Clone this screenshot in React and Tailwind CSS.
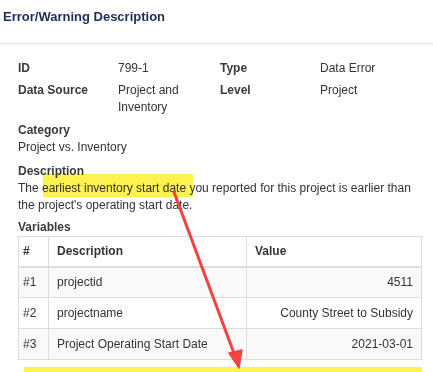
import React from 'react';

const rows = [
  { n: '#1', desc: 'projectid', value: '4511' },
  { n: '#2', desc: 'projectname', value: 'County Street to Subsidy' },
  { n: '#3', desc: 'Project Operating Start Date', value: '2021-03-01' },
];

function Field({ label, children }) {
  return (
    <>
      <div className="font-bold text-[#3a3a3a]">{label}</div>
      <div>{children}</div>
    </>
  );
}

export default function App() {
  return (
    <div className="relative w-[433px] h-[372px] overflow-hidden bg-white text-[12px] leading-[17px] text-[#333] font-['Liberation_Sans',Arial,sans-serif]">
      {/* header */}
      <div className="h-[44px] border-b border-[#e5e5e5] pl-[3px] pt-[8px]">
        <h1 className="text-[13px] font-bold text-[#1f2c5c] leading-[18px]">Error/Warning Description</h1>
      </div>

      <div className="px-[18px] pt-[16px]">
        {/* summary grid */}
        <div className="grid grid-cols-[100px_102px_100px_1fr] gap-y-[5px]">
          <Field label="ID">799-1</Field>
          <Field label="Type">Data Error</Field>
          <Field label="Data Source">Project and<br />Inventory</Field>
          <Field label="Level">Project</Field>
        </div>

        <div className="mt-[6px]">
          <div className="font-bold text-[#3a3a3a]">Category</div>
          <div>Project vs. Inventory</div>
        </div>

        <div className="mt-[7px]">
          <div className="font-bold text-[#3a3a3a]">Description</div>
          <p>
            The earliest inventory start date you reported for this project is earlier than the project's operating start date.
          </p>
        </div>

        <div className="mt-[5px] font-bold text-[#3a3a3a]">Variables</div>

        <table className="w-[404px] border-collapse border border-[#ddd]">
          <thead>
            <tr className="h-[30px]">
              <th className="w-[30px] border border-[#ddd] border-b-2 px-[4px] text-left font-bold">#</th>
              <th className="w-[198px] border border-[#ddd] border-b-2 px-[8px] text-left font-bold">Description</th>
              <th className="border border-[#ddd] border-b-2 px-[8px] text-left font-bold">Value</th>
            </tr>
          </thead>
          <tbody>
            {rows.map((r, i) => (
              <tr key={r.n} className={i % 2 === 0 ? 'h-[31px] bg-[#f9f9f9]' : 'h-[31px] bg-white'}>
                <td className="border border-[#ddd] px-[4px]">{r.n}</td>
                <td className="border border-[#ddd] px-[8px]">{r.desc}</td>
                <td className="border border-[#ddd] px-[8px] text-right">{r.value}</td>
              </tr>
            ))}
          </tbody>
        </table>
      </div>

      {/* annotations */}
      <div className="absolute left-[43px] top-[174px] w-[150px] h-[23px] bg-[#fdf24f] mix-blend-multiply" />
      <div className="absolute left-[24px] top-[367px] w-[398px] h-[5px] bg-[#fdf24f]" />
      <svg className="absolute inset-0 pointer-events-none" width="433" height="372" viewBox="0 0 433 372">
        <line x1="174" y1="192" x2="235" y2="356" stroke="#f04343" strokeWidth="3" strokeLinecap="round" />
        <path d="M229 353 L239 368 L242 350 Z" fill="#f04343" stroke="#f04343" strokeWidth="1.5" strokeLinejoin="round" />
      </svg>
    </div>
  );
}
